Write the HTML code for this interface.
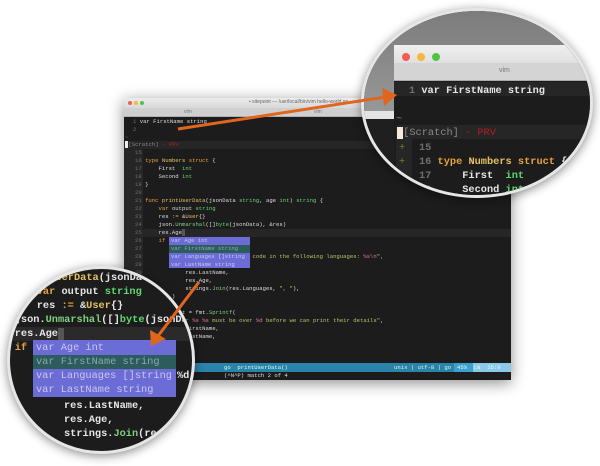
<!DOCTYPE html>
<html><head><meta charset="utf-8"><style>
*{margin:0;padding:0;box-sizing:border-box}
body{width:600px;height:466px;background:#fff;position:relative;overflow:hidden;font-family:"Liberation Mono",monospace}
.abs{position:absolute}
.win{left:124px;top:98px;width:387px;height:282px;background:#1c1c1c;box-shadow:0 3px 14px rgba(0,0,0,.45);overflow:hidden}
.ln{position:absolute;left:0;white-space:pre;font-size:5.6px;line-height:8px;height:8px;color:#dcdcdc}
.k{color:#e8a23a}.t{color:#e6c060}.g{color:#5fd76f}.n{color:#6f6f6f}.r{color:#b02020}.s{color:#b5c46a}.f{color:#7fd07f}.p{color:#e37a9a}
.c{position:absolute;border-radius:50%;overflow:hidden;border:3px solid #e6e6e6;box-shadow:0 2px 10px rgba(0,0,0,.45)}
.big{position:absolute;white-space:pre;font-size:10.3px;line-height:14px;color:#e6e6e6;font-weight:bold}
</style></head><body>

<div class="abs win">
  <div class="abs" style="left:0;top:0;width:387px;height:10px;background:linear-gradient(#ececec,#d8d8d8)"></div>
  <div class="abs" style="left:4px;top:3px;width:4px;height:4px;border-radius:50%;background:#f25c54"></div>
  <div class="abs" style="left:10px;top:3px;width:4px;height:4px;border-radius:50%;background:#f6b73c"></div>
  <div class="abs" style="left:16px;top:3px;width:4px;height:4px;border-radius:50%;background:#4fc345"></div>
  <div class="abs" style="left:125px;top:1px;font-family:'Liberation Sans',sans-serif;font-size:5px;color:#666;white-space:pre">▪ sitepoint — /usr/local/bin/vim hello-world.go — vim</div>
  <div class="abs" style="left:0;top:10px;width:387px;height:9px;background:#cfcfcf;border-bottom:1px solid #b0b0b0"></div>
  <div class="abs" style="left:60px;top:11px;font-family:'Liberation Sans',sans-serif;font-size:5px;color:#777">vim</div>
  <div class="abs" style="left:190px;top:11px;font-family:'Liberation Sans',sans-serif;font-size:5px;color:#777">vim</div>
  <div class="ln" style="top:20px;left:9px"><span class="n">1</span> var FirstName string</div>
  <div class="ln" style="top:28px;left:9px"><span class="n">2</span></div>
  <div class="ln" style="top:36px;left:1px;color:#666">~</div>
  <div class="abs" style="left:0;top:43px;width:387px;height:8px;background:#262626"></div>
  <div class="ln" style="top:43px;left:1px"><span style="background:#eee">&nbsp;</span><span style="color:#888">[Scratch]</span> <span class="r">- PRV</span></div>
  <div class="abs" style="left:0;top:51px;width:19px;height:214px;background:#262626"></div>
  <div class="abs" style="left:0;top:131px;width:387px;height:8px;background:#262626"></div>
  <div class="ln" style="top:51px;left:11px"><span class="n">15</span></div>
  <div class="ln" style="top:59px;left:11px"><span class="n">16</span> <span class="k">type</span> <span class="t">Numbers</span> <span class="k">struct</span> {</div>
  <div class="ln" style="top:67px;left:11px"><span class="n">17</span>     First  <span class="g">int</span></div>
  <div class="ln" style="top:75px;left:11px"><span class="n">18</span>     Second <span class="g">int</span></div>
  <div class="ln" style="top:83px;left:11px"><span class="n">19</span> }</div>
  <div class="ln" style="top:91px;left:11px"><span class="n">20</span></div>
  <div class="ln" style="top:99px;left:11px"><span class="n">21</span> <span class="k">func</span> <span class="t">printUserData</span>(jsonData <span class="g">string</span>, age <span class="g">int</span>) <span class="g">string</span> {</div>
  <div class="ln" style="top:107px;left:11px"><span class="n">22</span>     <span class="k">var</span> output <span class="g">string</span></div>
  <div class="ln" style="top:115px;left:11px"><span class="n">23</span>     res <span class="k">:=</span> &amp;<span class="t">User</span>{}</div>
  <div class="ln" style="top:123px;left:11px"><span class="n">24</span>     json.<span class="f">Unmarshal</span>([]<span class="g">byte</span>(jsonData), &amp;res)</div>
  <div class="ln" style="top:131px;left:11px"><span class="n">25</span>     res.Age<span style="background:#555"> </span></div>
  <div class="ln" style="top:139px;left:11px"><span class="n">26</span>     <span class="k">if</span></div>
  <div class="ln" style="top:147px;left:11px"><span class="n">27</span></div>
  <div class="ln" style="top:155px;left:11px"><span class="n">28</span>                          <span class="s"><span class="p">%d</span> can code in the following languages: <span class="p">%s\n</span>",</span></div>
  <div class="ln" style="top:163px;left:11px"><span class="n">29</span></div>
  <div class="ln" style="top:171px;left:11px"><span class="n">30</span>             res.LastName,</div>
  <div class="ln" style="top:179px;left:11px"><span class="n">31</span>             res.Age,</div>
  <div class="ln" style="top:187px;left:11px"><span class="n">32</span>             strings.<span class="f">Join</span>(res.Languages, <span class="s">", "</span>),</div>
  <div class="ln" style="top:195px;left:11px"><span class="n">33</span>         )</div>
  <div class="ln" style="top:203px;left:11px"><span class="n">34</span>     } {</div>
  <div class="ln" style="top:211px;left:11px"><span class="n">35</span>       output = fmt.<span class="f">Sprintf</span>(</div>
  <div class="ln" style="top:219px;left:11px"><span class="n">36</span>         <span class="s">"User <span class="p">%s %s</span> must be over <span class="p">%d</span> before we can print their details"</span>,</div>
  <div class="ln" style="top:227px;left:11px"><span class="n">37</span>         res.FirstName,</div>
  <div class="ln" style="top:235px;left:11px"><span class="n">38</span>         res.LastName,</div>
  <div class="ln" style="top:243px;left:11px"><span class="n">39</span>         age,</div>
  <div class="abs" style="left:45px;top:139px;width:81px;height:31px;background:#6c6cd6"></div>
  <div class="abs" style="left:45px;top:147px;width:81px;height:8px;background:#2d5c5c"></div>
  <div class="ln" style="top:139px;left:47px;color:#c8c8f0">var Age int</div>
  <div class="ln" style="top:147px;left:47px;color:#8aaaaa">var FirstName string</div>
  <div class="ln" style="top:155px;left:47px;color:#c8c8f0">var Languages []string</div>
  <div class="ln" style="top:163px;left:47px;color:#c8c8f0">var LastName string</div>
  <div class="abs" style="left:0;top:265px;width:387px;height:9px;background:#2a84aa"></div>
  <div class="ln" style="top:266px;left:100px;color:#cfe">go  printUserData()</div>
  <div class="ln" style="top:266px;left:270px;color:#cfe">unix | utf-8 | go</div>
  <div class="abs" style="left:330px;top:265px;width:19px;height:9px;background:#3aa0cc"></div>
  <div class="abs" style="left:349px;top:265px;width:38px;height:9px;background:#8cc8e8"></div>
  <div class="ln" style="top:266px;left:333px;color:#dff">45%  LN  25:9</div>
  <div class="ln" style="top:274px;left:100px;color:#ddd">(^N^P) match 2 of 4</div>
</div>

<!-- top circle -->
<div class="c" style="left:361px;top:8px;width:232px;height:190px;background:#1c1c1c">
  <div class="abs" style="left:0;top:0;width:240px;height:110px;background:linear-gradient(#7c7c7c,#9a9a9a)"></div>
  <div class="abs" style="left:0;top:100px;width:40px;height:8px;background:#e4e4e4"></div>
  <div class="abs" style="left:0;top:108px;width:40px;height:100px;background:#1f1f1f"></div>
  <div class="abs" style="left:30px;top:34px;width:210px;height:18px;background:linear-gradient(#f0f0f0,#e0e0e0)"></div>
  <div class="abs" style="left:38px;top:42px;width:8px;height:8px;border-radius:50%;background:#f25c54"></div>
  <div class="abs" style="left:53px;top:42px;width:8px;height:8px;border-radius:50%;background:#f6b73c"></div>
  <div class="abs" style="left:68px;top:42px;width:8px;height:8px;border-radius:50%;background:#4fc345"></div>
  <div class="abs" style="left:30px;top:52px;width:210px;height:18px;background:#d4d4d4;border-bottom:1px solid #aaa"></div>
  <div class="abs" style="left:135px;top:56px;font-family:'Liberation Sans',sans-serif;font-size:7px;color:#777">vim</div>
  <div class="abs" style="left:30px;top:70px;width:210px;height:130px;background:#1c1c1c"></div>
  <div class="abs" style="left:30px;top:71px;width:210px;height:14px;background:#262626"></div>
  <div class="big" style="left:45px;top:73px"><span class="n">1</span> var FirstName string</div>
  <div class="big" style="left:32px;top:101px;color:#666">~</div>
  <div class="abs" style="left:32px;top:114px;width:210px;height:14px;background:#262626"></div>
  <div class="big" style="left:33px;top:115px;font-weight:normal"><span style="background:#f3ead8">&nbsp;</span><span style="color:#888">[Scratch]</span> <span class="r">- PRV</span></div>
  <div class="abs" style="left:32px;top:128px;width:16px;height:80px;background:#262626"></div>
  <div class="big" style="left:35px;top:130px;color:#6b8a30;font-weight:normal">+<br>+<br>+<br>+</div>
  <div class="big" style="left:55px;top:130px"><span class="n">15</span><br><span class="n">16</span> <span class="k">type</span> <span class="t">Numbers</span> <span class="k">struct</span> {<br><span class="n">17</span>     First  <span class="g">int</span><br><span class="n">18</span>     Second <span class="g">int</span></div>
</div>

<!-- bottom circle -->
<div class="c" style="left:7px;top:266px;width:188px;height:188px;background:#1c1c1c">
  <div class="big" style="left:-4px;top:2px"><span class="t">  printUserData</span>(jsonData string</div>
  <div class="big" style="left:2px;top:16px">    <span class="k">var</span> output <span class="g">string</span></div>
  <div class="big" style="left:2px;top:30px">    res <span class="k">:=</span> &amp;<span class="t">User</span>{}</div>
  <div class="big" style="left:-20px;top:44px">    json.<span class="f">Unmarshal</span>([]<span class="g">byte</span>(jsonData), &amp;res)</div>
  <div class="abs" style="left:0;top:58px;width:190px;height:14px;background:#2a2a2a"></div>
  <div class="big" style="left:-20px;top:58px">    res.Age<span style="background:#555"> </span></div>
  <div class="big" style="left:-20px;top:72px">    <span class="k">if</span></div>
  <div class="abs" style="left:23px;top:71px;width:143px;height:57px;background:#6c6cd6"></div>
  <div class="abs" style="left:23px;top:86px;width:143px;height:14px;background:#2d5c5c"></div>
  <div class="big" style="left:26px;top:72px;color:#c8c8f0;font-weight:normal">var Age int<br><span style="color:#8aaaaa">var FirstName string</span><br>var Languages []string<br>var LastName string</div>
  <div class="big" style="left:167px;top:100px">%d</div>
  <div class="big" style="left:54px;top:130px">res.LastName,<br>res.Age,<br>strings.<span class="f">Join</span>(res.Languages</div>
</div>

<!-- arrows -->
<svg class="abs" style="left:0;top:0" width="600" height="466">
  <line x1="178" y1="129" x2="385" y2="97" stroke="#e0661e" stroke-width="3"/>
  <polygon points="397,95 382,88 384,106" fill="#e0661e"/>
  <line x1="199" y1="282" x2="158" y2="336" stroke="#e0661e" stroke-width="3"/>
  <polygon points="151,346 150,330 166,339" fill="#e0661e"/>
</svg>
</body></html>
